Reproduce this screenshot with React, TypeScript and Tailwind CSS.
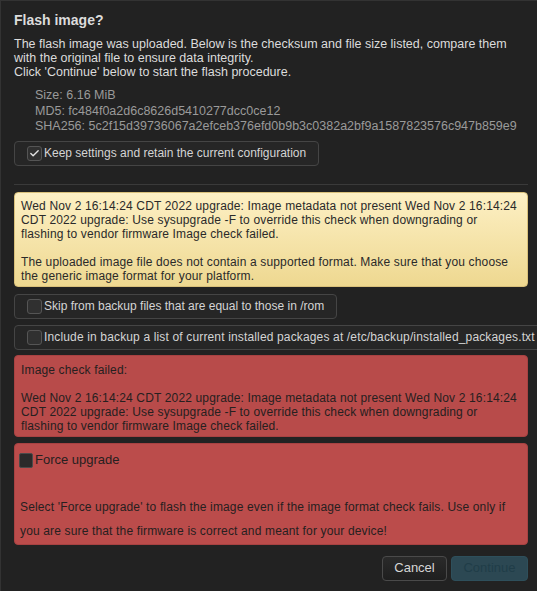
import { Check } from 'lucide-react';

const checkboxFrame =
  'inline-flex items-center self-start whitespace-nowrap rounded-[4px] border border-[#454545] bg-[#262626] py-[4px] pl-[12px] pr-[12px] text-[12px] text-[#d4d4d4]';

function Box({ checked }: { checked?: boolean }) {
  return (
    <span className="mr-[2px] flex h-[15px] w-[15px] shrink-0 items-center justify-center rounded-[3px] border border-[#555] bg-[#303030]">
      {checked && <Check className="size-[11px] text-[#e2e2e2]" strokeWidth={3} />}
    </span>
  );
}

export default function App() {
  return (
    <div
      className="flex min-h-[591px] w-full flex-col overflow-hidden border-l border-t border-[#333] bg-[#222] pl-[13px] pr-[9px] pt-[11px] text-[12px] leading-[14px] text-[#dcdcdc]"
      style={{ fontFamily: '"Liberation Sans", Arial, sans-serif' }}
    >
      <h4 className="text-[14px] font-bold leading-[16px] text-[#dcdcdc]">Flash image?</h4>

      <p className="mt-[9px] text-[12.5px]">
        The flash image was uploaded. Below is the checksum and file size listed, compare them
        with the original file to ensure data integrity.
        <br />
        Click 'Continue' below to start the flash procedure.
      </p>

      <ul className="ml-[21px] mt-[9px] text-[12.5px] leading-[15.5px] text-[#9a9a9a]">
        <li>Size: 6.16 MiB</li>
        <li>MD5: fc484f0a2d6c8626d5410277dcc0ce12</li>
        <li>SHA256: 5c2f15d39736067a2efceb376efd0b9b3c0382a2bf9a1587823576c947b859e9</li>
      </ul>

      <label className={`${checkboxFrame} mt-[6px]`}>
        <Box checked />
        Keep settings and retain the current configuration
      </label>

      <hr className="mt-[18px] border-t border-[#3a3a3a]" />

      {/* Validation warning */}
      <div className="mt-[7px] rounded-[4px] border border-[#d9c07a] bg-gradient-to-b from-[#fdf0c4] to-[#eed890] pb-[3px] pl-[6px] pr-[5px] pt-[6px] tracking-[0.15px] text-[#2a2a2a]">
        Wed Nov 2 16:14:24 CDT 2022 upgrade: Image metadata not present Wed Nov 2 16:14:24 CDT
        2022 upgrade: Use sysupgrade -F to override this check when downgrading or flashing to
        vendor firmware Image check failed.
        <br />
        <br />
        The uploaded image file does not contain a supported format. Make sure that you choose
        the generic image format for your platform.
      </div>

      <label className={`${checkboxFrame} mt-[7px]`}>
        <Box />
        Skip from backup files that are equal to those in /rom
      </label>

      <label className={`${checkboxFrame} mt-[6px] tracking-[0.15px]`}>
        <Box />
        Include in backup a list of current installed packages at /etc/backup/installed_packages.txt
      </label>

      <div className="mt-[5px] rounded-[4px] border border-[#a84242] bg-[#b84b4a] pb-[3px] pl-[6px] pr-[5px] pt-[7px] tracking-[0.15px] text-[#262020]">
        Image check failed:
        <br />
        <br />
        Wed Nov 2 16:14:24 CDT 2022 upgrade: Image metadata not present Wed Nov 2 16:14:24 CDT
        2022 upgrade: Use sysupgrade -F to override this check when downgrading or flashing to
        vendor firmware Image check failed.
      </div>

      <div className="mt-[6px] rounded-[4px] border border-[#a84242] bg-[#bb4c4b] px-[4px] pb-[1px] pt-[9px] text-[#262020]">
        <label className="flex items-center">
          <span className="mr-[2px] h-[15px] w-[14px] shrink-0 rounded-[2px] border border-[#4a4a4a] bg-[#2a2a2a]" />
          <span className="text-[13px]">Force upgrade</span>
        </label>
        <p className="mt-[27px] px-[1px] leading-[24px] tracking-[0.15px]">
          Select 'Force upgrade' to flash the image even if the image format check fails. Use only
          if you are sure that the firmware is correct and meant for your device!
        </p>
      </div>

      <div className="mt-[11px] flex justify-end gap-[4px]">
        <button
          type="button"
          className="h-[25px] w-[65px] rounded-[4px] border border-[#4a4a4a] bg-gradient-to-b from-[#2a2a2a] to-[#1f1f1f] text-[13px] text-[#d6d6d6]"
        >
          Cancel
        </button>
        <button
          type="button"
          disabled
          className="h-[25px] w-[77px] rounded-[4px] border border-[#2e4f5b] bg-[#2c4853] text-[13px] text-[#203d48]"
        >
          Continue
        </button>
      </div>
    </div>
  );
}
